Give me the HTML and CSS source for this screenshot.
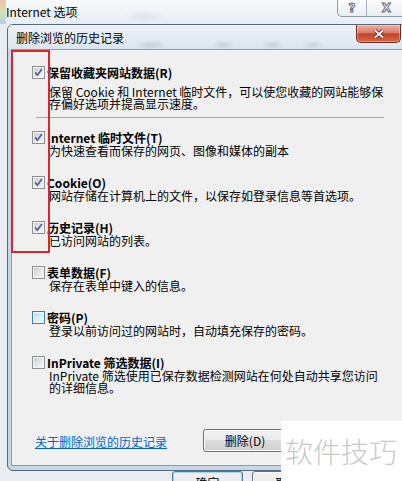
FILE: index.html
```html
<!DOCTYPE html>
<html>
<head>
  <meta charset="utf-8">
  <title>删除浏览的历史记录</title>
  <link rel="stylesheet" href="styles.css">
</head>
<body>
<div class="win">
  <div class="win-bar">
    <span class="win-title">Internet 选项</span>
    <div class="caps">
      <span class="cap cap-help">?</span>
      <span class="cap cap-close">X</span>
    </div>
  </div>

  <div class="dlg">
    <div class="dlg-bar">
      <span class="dlg-title">删除浏览的历史记录</span>
      <span class="dlg-close">
        <svg width="12" height="10" viewBox="0 0 12 10"><path d="M2 1.5 L10 8.5 M10 1.5 L2 8.5" stroke="#5a1d14" stroke-width="3.4" fill="none"/><path d="M2 1.5 L10 8.5 M10 1.5 L2 8.5" stroke="#fff" stroke-width="1.8" fill="none"/></svg>
      </span>
    </div>
    <div class="frame">
      <div class="client">
        <div class="opt first">
          <span class="cb"><svg width="11" height="11" viewBox="0 0 11 11"><path d="M2.2 5.4 L4.4 8.2 L8.9 2" stroke="#4b5f96" stroke-width="1.7" fill="none"/></svg></span>
          <div class="txt">
            <div class="lbl">保留收藏夹网站数据(R)</div>
            <div class="desc">保留 Cookie 和 Internet 临时文件，可以使您收藏的网站能够保<br>存偏好选项并提高显示速度。</div>
          </div>
        </div>
        <div class="sep"></div>

        <div class="opt">
          <span class="cb"><svg width="11" height="11" viewBox="0 0 11 11"><path d="M2.2 5.4 L4.4 8.2 L8.9 2" stroke="#4b5f96" stroke-width="1.7" fill="none"/></svg></span>
          <div class="txt">
            <div class="lbl">Internet 临时文件(T)</div>
            <div class="desc">为快速查看而保存的网页、图像和媒体的副本</div>
          </div>
        </div>

        <div class="opt">
          <span class="cb"><svg width="11" height="11" viewBox="0 0 11 11"><path d="M2.2 5.4 L4.4 8.2 L8.9 2" stroke="#4b5f96" stroke-width="1.7" fill="none"/></svg></span>
          <div class="txt">
            <div class="lbl">Cookie(O)</div>
            <div class="desc">网站存储在计算机上的文件，以保存如登录信息等首选项。</div>
          </div>
        </div>

        <div class="opt">
          <span class="cb"><svg width="11" height="11" viewBox="0 0 11 11"><path d="M2.2 5.4 L4.4 8.2 L8.9 2" stroke="#4b5f96" stroke-width="1.7" fill="none"/></svg></span>
          <div class="txt">
            <div class="lbl">历史记录(H)</div>
            <div class="desc">已访问网站的列表。</div>
          </div>
        </div>

        <div class="opt">
          <span class="cb"></span>
          <div class="txt">
            <div class="lbl">表单数据(F)</div>
            <div class="desc">保存在表单中键入的信息。</div>
          </div>
        </div>

        <div class="opt">
          <span class="cb hover"></span>
          <div class="txt">
            <div class="lbl">密码(P)</div>
            <div class="desc">登录以前访问过的网站时，自动填充保存的密码。</div>
          </div>
        </div>

        <div class="opt">
          <span class="cb"></span>
          <div class="txt">
            <div class="lbl">InPrivate 筛选数据(I)</div>
            <div class="desc">InPrivate 筛选使用已保存数据检测网站在何处自动共享您访问<br>的详细信息。</div>
          </div>
        </div>

        <div class="foot">
          <a class="about" href="#">关于删除浏览的历史记录</a>
          <button class="btn del">删除(D)</button>
        </div>
      </div>
    </div>
  </div>

  <div class="win-btns">
    <button class="btn ok">确定</button>
    <button class="btn">取消</button>
  </div>

  <div class="mark"></div>
  <div class="wm">软件技巧</div>
</div>
</body>
</html>
```

FILE: styles.css
```css
* { box-sizing: border-box; }
html, body { margin: 0; padding: 0; }
body { width: 402px; height: 481px; overflow: hidden; font: 12px "Noto Sans CJK SC", sans-serif; color: #000; }

.win { position: relative; width: 402px; height: 481px; overflow: hidden; background: #e9edf2; }

/* outer window caption */
.win-bar {
  height: 24px; display: flex; align-items: flex-start;
  background:
    linear-gradient(to bottom, rgba(236,140,90,.55), rgba(190,215,120,.55) 50%, rgba(120,170,230,.45)) no-repeat 0 0 / 6px 24px,
    radial-gradient(ellipse 22px 6px at 145px 16px, rgba(110,130,160,.12), transparent),
    linear-gradient(to bottom, #f8fafc, #e6edf4);
}
.win-title { padding: 4px 0 0 6px; line-height: 16px; font-size: 12px; }
.caps {
  margin-left: auto; display: flex; height: 17px;
  border: 1px solid #8d9aa9; border-top: 0; border-right: 0; border-radius: 0 0 0 5px;
  background: linear-gradient(#fdfdfe, #e8edf2);
}
.cap { display: flex; align-items: center; justify-content: center; font: bold 12px "DejaVu Sans", sans-serif; color: #fbfbfb; -webkit-text-stroke: 0.9px #5d6470; }
.cap-help { width: 29px; border-right: 1px solid #a7b2bf; }
.cap-close { width: 35px; padding-left: 4px; }

/* inner dialog */
.dlg { margin-left: 7px; width: 400px; border: 1px solid #56687c; border-radius: 6px; background: #c8d7e7; }
.dlg-bar {
  height: 24px; display: flex; align-items: flex-start; border-radius: 5px 5px 0 0;
  background:
    radial-gradient(ellipse 16px 5px at 143px 20px, rgba(70,80,95,.16), transparent),
    radial-gradient(ellipse 12px 5px at 215px 20px, rgba(70,80,95,.14), transparent),
    radial-gradient(ellipse 12px 5px at 265px 20px, rgba(70,80,95,.14), transparent),
    radial-gradient(ellipse 12px 5px at 305px 20px, rgba(70,80,95,.12), transparent),
    linear-gradient(to bottom, #eef3f8, #dae5f0);
}
.dlg-title { padding: 6px 0 0 8px; line-height: 14px; }
.dlg-close {
  margin-left: auto; margin-right: 5px; width: 45px; height: 18px;
  display: flex; align-items: center; justify-content: center;
  border: 1px solid #6e2b22; border-top: 0; border-radius: 0 0 5px 5px;
  background: linear-gradient(#eeb1a3, #db7c67 45%, #c4432d 52%, #d4683f);
  box-shadow: inset 0 0 0 1px rgba(255,210,200,.45);
}

.frame { padding: 0 3px 4px; }
.client { background: #f0f0f0; border: 1px solid #8b9cb0; padding: 16px 0 13px 20px; }

/* options */
.opt { display: flex; gap: 2px; margin-bottom: 19px; }
.opt.first { margin-bottom: 0; }
.cb {
  flex: none; width: 13px; height: 13px; padding: 0; display: block;
  border: 1px solid #8e8f8f;
  background: linear-gradient(135deg, #c3c8ce 0%, #e6e8eb 55%, #f8f8f8 100%);
  box-shadow: inset 0 0 0 1px #f6f6f6;
}
.cb svg { display: block; }
.cb.hover { border-color: #3c7fb1; background: linear-gradient(135deg, #b3dcf5 0%, #def1fc 60%, #f0f9fe 100%); }
.txt { white-space: nowrap; }
.lbl { font-weight: bold; line-height: 14px; }
.desc { line-height: 12px; padding-left: 2px; }
.first .desc { margin-top: 6px; }
.sep { margin: 7px 0 13px 4px; width: 348px; height: 1px; background: #a6a6a6; }

/* sibling margins collapse, so this one sets the full gap */
.foot { display: flex; align-items: center; margin-top: 35px; height: 23px; }
.about { color: #0066cc; text-decoration: underline; line-height: 14px; margin: 3px 0 0 3px; }

.btn {
  width: 84px; height: 23px; padding: 0; font: 12px "Noto Sans CJK SC", sans-serif; color: #000;
  border: 1px solid #707070; border-radius: 3px;
  background: linear-gradient(#f2f2f2, #ebebeb 49%, #dddddd 50%, #cfcfcf);
  box-shadow: inset 0 0 0 1px #fbfbfb;
}
.del { margin-left: 36px; }

/* outer window buttons, mostly hidden */
.win-btns { display: flex; gap: 9px; padding-left: 172px; }
.win-btns .btn { width: 71px; }
.ok { border-color: #3c7fb1; box-shadow: inset 0 0 0 1px #9fd5f5; }

/* overlays on top of the screenshot */
.mark { position: absolute; left: 11px; top: 50px; width: 39px; height: 203px; border: 2px solid #d8262b; }
.wm {
  position: absolute; left: 281px; top: 421px; width: 121px; height: 60px;
  background: #fff; color: #c9c9c9; font-size: 28px; font-weight: 300;
  line-height: 60px; padding-left: 4px; white-space: nowrap;
}
```
